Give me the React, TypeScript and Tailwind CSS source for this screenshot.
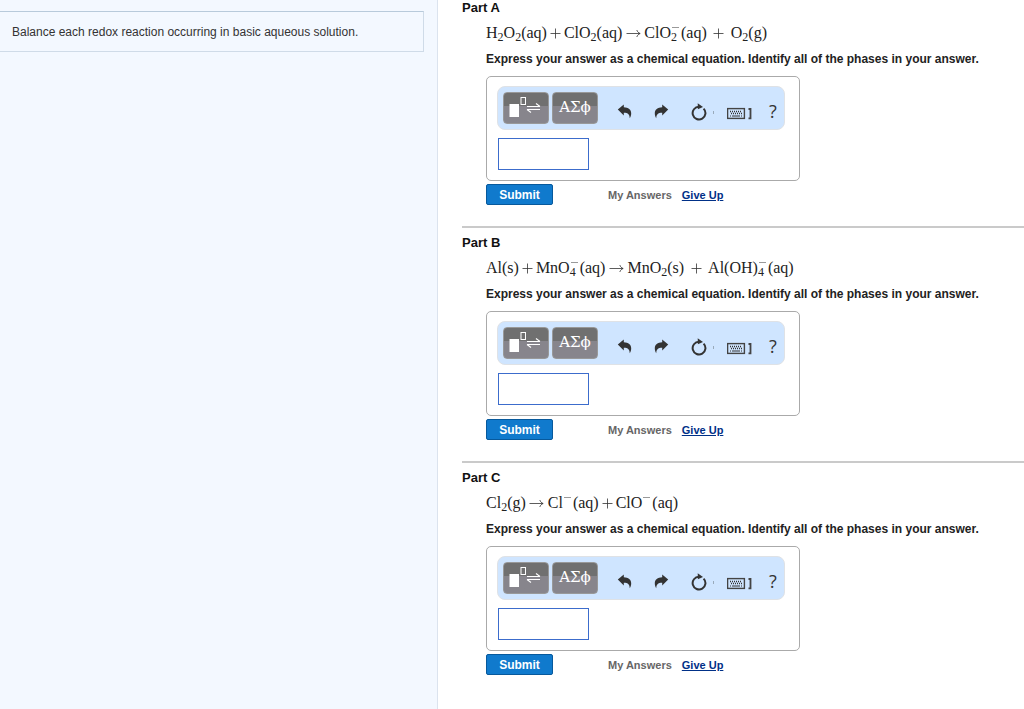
import type { ReactNode } from "react";

function Sub({ children }: { children: ReactNode }) {
  return <sub className="bottom-auto -mb-[7px] text-[12px] leading-none">{children}</sub>;
}

/* Subscript count with the ion charge stacked above it. */
function Ion({ count }: { count?: string }) {
  return (
    <span className="flex h-[18px] w-2.5 flex-col items-start justify-between">
      <svg width="9" height="6" viewBox="0 0 9 6" role="img" aria-label="minus">
        <path d="M1 3.5h7" stroke="#999" strokeWidth="1" fill="none" />
      </svg>
      <span className="text-[12px] leading-[10px]">{count}</span>
    </span>
  );
}

function Term({ children }: { children: ReactNode }) {
  return <span className="flex items-center">{children}</span>;
}

function Plus({ wide }: { wide?: boolean }) {
  return (
    <span className={wide ? "flex w-6 justify-center" : "flex w-[17px] justify-center"}>
      <svg width="11" height="11" viewBox="0 0 11 11" role="img" aria-label="plus">
        <path d="M5.5 0.5v10M0.5 5.5h10" stroke="#333" strokeWidth="0.8" fill="none" />
      </svg>
    </span>
  );
}

function Arrow() {
  return (
    <span className="flex w-[22px] justify-center">
      <svg width="15" height="9" viewBox="0 0 15 9" role="img" aria-label="yields">
        <path d="M0.5 4.5h13.5M10.8 1c.6 1.8 1.7 2.9 3.4 3.5-1.7.6-2.8 1.7-3.4 3.5" stroke="#333" strokeWidth="0.8" fill="none" />
      </svg>
    </span>
  );
}

function Toolbar() {
  const key =
    "flex h-8 w-[46px] items-center justify-center rounded border border-[#999] bg-linear-to-b from-[#707070] from-45% to-[#87858c] to-45% text-white";
  return (
    <div className="flex h-11 items-center rounded-lg border border-[#dfe2e6] bg-[#cfe5ff] pl-[5px]">
      <button type="button" aria-label="Templates" className={key}>
        <svg width="34" height="22" viewBox="0 0 34 22" fill="none">
          <rect x="0.5" y="7" width="9.5" height="13" fill="#fff" />
          <rect x="12" y="0.5" width="4.5" height="7" stroke="#fff" />
          <path d="M18 9.5h13M27 6.5l4 3M18 12.5h13M18 12.5l4 3" stroke="#fff" strokeWidth="1.1" />
        </svg>
      </button>
      <button type="button" aria-label="Greek letters" className={`${key} ml-[3px] pb-0.5 font-['DejaVu_Serif',serif] text-[15px] leading-5`}>
        ΑΣϕ
      </button>
      <button type="button" aria-label="Undo" className="ml-[19px] mt-1.5">
        <svg width="15" height="15" viewBox="0 0 15 15" fill="#333">
          <path d="M0.8 5.6 6.8 0.4v2.8c4.6.1 7.4 2.3 7.4 6.1 0 2-.6 3.7-1.5 5 .1-3.6-1.5-5.6-5.9-5.6v2.7z" />
        </svg>
      </button>
      <button type="button" aria-label="Redo" className="ml-[22px] mt-1.5">
        <svg width="15" height="15" viewBox="0 0 15 15" fill="#333">
          <path d="M14.2 5.6 8.2.4v2.8C3.6 3.3.8 5.5.8 9.3c0 2 .6 3.7 1.5 5-.1-3.6 1.5-5.6 5.9-5.6v2.7z" />
        </svg>
      </button>
      <button type="button" aria-label="Reset" className="ml-[22px] mt-2">
        <svg width="24" height="18" viewBox="0 0 24 18" fill="none">
          <path d="M12.6 5.6A6.4 6.4 0 1 1 8 3.7" stroke="#333" strokeWidth="2" />
          <path d="M6.7 0.2 12 3.9 6.9 6.3z" fill="#333" />
          <path d="M22.5 8v3" stroke="#9ab" />
        </svg>
      </button>
      <button type="button" aria-label="Keyboard" className="ml-3 mt-2.5">
        <svg width="26" height="13" viewBox="0 0 26 13" fill="none">
          <rect x="0.6" y="1.6" width="16.8" height="9.8" stroke="#444" strokeWidth="1.4" />
          <path d="M3 4.5h12M4 6.5h11" stroke="#333" strokeWidth="1.3" strokeDasharray="1 1" />
          <path d="M3 9h1M5 9h8M14 9h1" stroke="#333" strokeWidth="1.2" />
          <path d="M21.5 2h2v9.4h-2" stroke="#444" strokeWidth="1.8" />
        </svg>
      </button>
      <button type="button" aria-label="Help" className="ml-4 mt-1.5 font-['Open_Sans',sans-serif] text-[18px] leading-5 text-[#333]">
        ?
      </button>
    </div>
  );
}

function Part({ name, children }: { name: string; children: ReactNode }) {
  const id = `answer-${name}`;
  return (
    <section className="border-t-2 border-[#cacaca] pt-[7px] first:border-t-0 first:pt-0">
      <h2 className="text-[13px] leading-4 font-bold text-[#111]">Part {name}</h2>
      <div className="pb-[21px] pl-6">
        <div className="mt-[5px] flex h-6 items-center font-['Liberation_Serif',serif] text-[16px] leading-6 whitespace-nowrap text-[#222]">
          {children}
        </div>
        <label htmlFor={id} className="mt-1.5 block text-[12px] leading-4 font-bold text-[#222]">
          Express your answer as a chemical equation. Identify all of the phases in your answer.
        </label>
        <form onSubmit={(e) => e.preventDefault()}>
          <div className="mt-[9px] w-[314px] rounded-[5px] border border-[#aaa] pt-[9px] pr-3.5 pb-2.5 pl-2.5">
            <Toolbar />
            <input id={id} type="text" className="mt-2 ml-px block h-8 w-[91px] border border-[#3c6ccc] bg-white px-1 outline-none" />
          </div>
          <div className="mt-[3px] flex items-center text-[11px] leading-4 font-bold">
            <button type="submit" className="h-[21px] w-[67px] rounded-[2px] border border-[#07599c] bg-[#107acd] text-[12px] leading-4 text-white">
              Submit
            </button>
            <span className="ml-[55px] text-[#666]">My Answers</span>
            <a href="#give-up" className="ml-2.5 text-[#003087] underline">
              Give Up
            </a>
          </div>
        </form>
      </div>
    </section>
  );
}

export default function App() {
  return (
    <div className="flex min-h-screen bg-white font-['Liberation_Sans',Arial,sans-serif]">
      <aside className="w-[438px] shrink-0 border-r border-[#dbe3ee] bg-[#f3f8ff] pt-[11px]">
        <p className="mr-[13px] border border-l-0 border-[#cfdbe8] border-t-[#b8cadb] pt-3 pb-[11px] pl-3 text-[12px] leading-4 text-[#333]">
          Balance each redox reaction occurring in basic aqueous solution.
        </p>
      </aside>
      <main className="min-w-0 flex-1 pl-6">
        <Part name="A">
          <Term>H<Sub>2</Sub>O<Sub>2</Sub>(aq)</Term>
          <Plus />
          <Term>ClO<Sub>2</Sub>(aq)</Term>
          <Arrow />
          <Term>ClO<Ion count="2" /></Term>
          <span>(aq)</span>
          <Plus wide />
          <Term>O<Sub>2</Sub>(g)</Term>
        </Part>
        <Part name="B">
          <Term>Al(s)</Term>
          <Plus />
          <Term>MnO<Ion count="4" /></Term>
          <span>(aq)</span>
          <Arrow />
          <Term>MnO<Sub>2</Sub>(s)</Term>
          <Plus wide />
          <Term>Al(OH)<Ion count="4" /></Term>
          <span>(aq)</span>
        </Part>
        <Part name="C">
          <Term>Cl<Sub>2</Sub>(g)</Term>
          <Arrow />
          <Term>Cl<Ion /></Term>
          <span>(aq)</span>
          <Plus />
          <Term>ClO<Ion /></Term>
          <span>(aq)</span>
        </Part>
      </main>
    </div>
  );
}
